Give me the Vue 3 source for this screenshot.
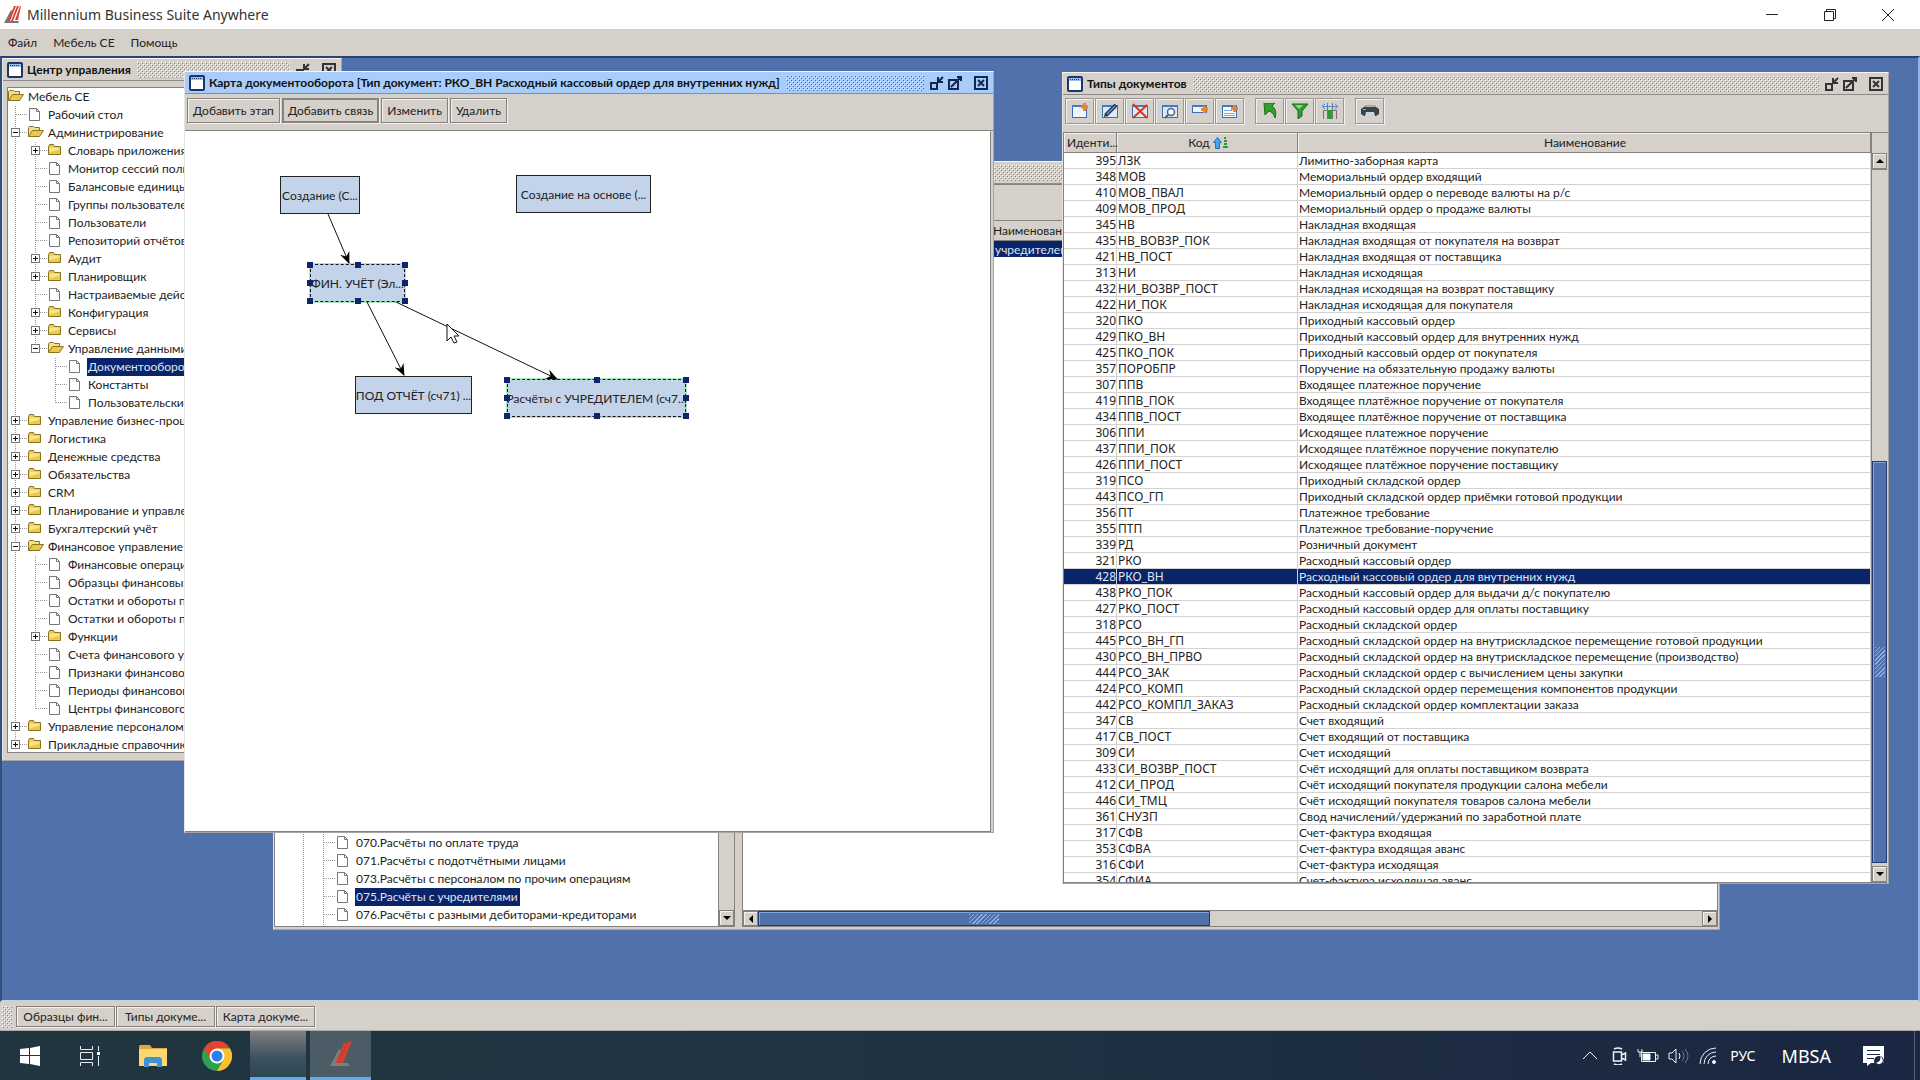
<script setup>
import { computed } from 'vue'

const menus = ['Файл', 'Мебель СЕ', 'Помощь']

// depth, kind (open | closed | doc), label
const navRows = [
  [0, 'open', 'Мебель СЕ'],
  [1, 'doc', 'Рабочий стол'],
  [1, 'open', 'Администрирование'],
  [2, 'closed', 'Словарь приложения'],
  [2, 'doc', 'Монитор сессий пользователей'],
  [2, 'doc', 'Балансовые единицы'],
  [2, 'doc', 'Группы пользователей'],
  [2, 'doc', 'Пользователи'],
  [2, 'doc', 'Репозиторий отчётов'],
  [2, 'closed', 'Аудит'],
  [2, 'closed', 'Планировщик'],
  [2, 'doc', 'Настраиваемые действия'],
  [2, 'closed', 'Конфигурация'],
  [2, 'closed', 'Сервисы'],
  [2, 'open', 'Управление данными'],
  [3, 'doc', 'Документооборот'],
  [3, 'doc', 'Константы'],
  [3, 'doc', 'Пользовательские'],
  [1, 'closed', 'Управление бизнес-процессами'],
  [1, 'closed', 'Логистика'],
  [1, 'closed', 'Денежные средства'],
  [1, 'closed', 'Обязательства'],
  [1, 'closed', 'CRM'],
  [1, 'closed', 'Планирование и управление'],
  [1, 'closed', 'Бухгалтерский учёт'],
  [1, 'open', 'Финансовое управление'],
  [2, 'doc', 'Финансовые операции'],
  [2, 'doc', 'Образцы финансовых'],
  [2, 'doc', 'Остатки и обороты по'],
  [2, 'doc', 'Остатки и обороты по'],
  [2, 'closed', 'Функции'],
  [2, 'doc', 'Счета финансового учёта'],
  [2, 'doc', 'Признаки финансового'],
  [2, 'doc', 'Периоды финансового'],
  [2, 'doc', 'Центры финансового'],
  [1, 'closed', 'Управление персоналом'],
  [1, 'closed', 'Прикладные справочники'],
]

const accountRows = [
  [3, 'doc', '070.Расчёты по оплате труда'],
  [3, 'doc', '071.Расчёты с подотчётными лицами'],
  [3, 'doc', '073.Расчёты с персоналом по прочим операциям'],
  [3, 'doc', '075.Расчёты с учредителями'],
  [3, 'doc', '076.Расчёты с разными дебиторами-кредиторами'],
  [3, 'doc', ''],
  [2, 'doc', ''],
]

function buildTree(rows, selected) {
  return rows.map(([depth, kind, label], i) => {
    const guides = []
    for (let level = 1; level <= depth; level++) {
      let more = false
      for (let j = i + 1; j < rows.length && rows[j][0] >= level; j++) {
        if (rows[j][0] === level) { more = true; break }
      }
      const own = level === depth
      guides.push({
        line: own ? (more ? 'full' : 'half') : (more ? 'full' : ''),
        own,
        toggle: own && kind !== 'doc' ? (kind === 'open' ? 'minus' : 'plus') : '',
      })
    }
    return { kind, label, guides, selected: label === selected }
  })
}

const navTree = computed(() => buildTree(navRows, 'Документооборот'))
const accountTree = computed(() => buildTree(accountRows, '075.Расчёты с учредителями'))
const trees = computed(() => ({ nav: navTree.value, accounts: accountTree.value }))

const docTypes = [
  [395, 'ЛЗК', 'Лимитно-заборная карта'],
  [348, 'МОВ', 'Мемориальный ордер входящий'],
  [410, 'МОВ_ПВАЛ', 'Мемориальный ордер о переводе валюты на р/с'],
  [409, 'МОВ_ПРОД', 'Мемориальный ордер о продаже валюты'],
  [345, 'НВ', 'Накладная входящая'],
  [435, 'НВ_ВОВЗР_ПОК', 'Накладная входящая от покупателя на возврат'],
  [421, 'НВ_ПОСТ', 'Накладная входящая от поставщика'],
  [313, 'НИ', 'Накладная исходящая'],
  [432, 'НИ_ВОЗВР_ПОСТ', 'Накладная исходящая на возврат поставщику'],
  [422, 'НИ_ПОК', 'Накладная исходящая для покупателя'],
  [320, 'ПКО', 'Приходный кассовый ордер'],
  [429, 'ПКО_ВН', 'Приходный кассовый ордер для внутренних нужд'],
  [425, 'ПКО_ПОК', 'Приходный кассовый ордер от покупателя'],
  [357, 'ПОРОБПР', 'Поручение на обязательную продажу валюты'],
  [307, 'ППВ', 'Входящее платежное поручение'],
  [419, 'ППВ_ПОК', 'Входящее платёжное поручение от покупателя'],
  [434, 'ППВ_ПОСТ', 'Входящее платёжное поручение от поставщика'],
  [306, 'ППИ', 'Исходящее платежное поручение'],
  [437, 'ППИ_ПОК', 'Исходящее платёжное поручение покупателю'],
  [426, 'ППИ_ПОСТ', 'Исходящее платёжное поручение поставщику'],
  [319, 'ПСО', 'Приходный складской ордер'],
  [443, 'ПСО_ГП', 'Приходный складской ордер приёмки готовой продукции'],
  [356, 'ПТ', 'Платежное требование'],
  [355, 'ПТП', 'Платежное требование-поручение'],
  [339, 'РД', 'Розничный документ'],
  [321, 'РКО', 'Расходный кассовый ордер'],
  [428, 'РКО_ВН', 'Расходный кассовый ордер для внутренних нужд'],
  [438, 'РКО_ПОК', 'Расходный кассовый ордер для выдачи д/с покупателю'],
  [427, 'РКО_ПОСТ', 'Расходный кассовый ордер для оплаты поставщику'],
  [318, 'РСО', 'Расходный складской ордер'],
  [445, 'РСО_ВН_ГП', 'Расходный складской ордер на внутрискладское перемещение готовой продукции'],
  [430, 'РСО_ВН_ПРВО', 'Расходный складской ордер на внутрискладское перемещение (производство)'],
  [444, 'РСО_ЗАК', 'Расходный складской ордер с вычислением цены закупки'],
  [424, 'РСО_КОМП', 'Расходный складской ордер перемещения компонентов продукции'],
  [442, 'РСО_КОМПЛ_ЗАКАЗ', 'Расходный складской ордер комплектации заказа'],
  [347, 'СВ', 'Счет входящий'],
  [417, 'СВ_ПОСТ', 'Счет входящий от поставщика'],
  [309, 'СИ', 'Счет исходящий'],
  [433, 'СИ_ВОЗВР_ПОСТ', 'Счёт исходящий для оплаты поставщиком возврата'],
  [412, 'СИ_ПРОД', 'Счёт исходящий покупателя продукции салона мебели'],
  [446, 'СИ_ТМЦ', 'Счёт исходящий покупателя товаров салона мебели'],
  [361, 'СНУЗП', 'Свод начислений/удержаний по заработной плате'],
  [317, 'СФВ', 'Счет-фактура входящая'],
  [353, 'СФВА', 'Счет-фактура входящая аванс'],
  [316, 'СФИ', 'Счет-фактура исходящая'],
  [354, 'СФИА', 'Счет-фактура исходящая аванс'],
]

const toolGroups = [
  [['new', 'Создать'], ['edit', 'Изменить'], ['delete', 'Удалить'], ['view', 'Просмотр'], ['copy', 'Добавить строку'], ['list', 'Добавить список']],
  [['refresh', 'Обновить'], ['filter', 'Фильтр'], ['columns', 'Колонки']],
  [['print', 'Печать']],
]

const mapActions = ['Добавить этап', 'Добавить связь', 'Изменить', 'Удалить']

const nodes = [
  { label: 'Создание (С...', x: 95, y: 44, w: 80 },
  { label: 'Создание на основе (...', x: 331, y: 43, w: 135 },
  { label: 'ФИН. УЧЁТ (Эл...', x: 125, y: 132, w: 95, selected: true },
  { label: 'ПОД ОТЧЁТ (сч71) ...', x: 170, y: 244, w: 117 },
  { label: 'Расчёты с УЧРЕДИТЕЛЕМ (сч7...', x: 322, y: 247, w: 179, selected: true },
]
const handles = ['nw', 'n', 'ne', 'w', 'e', 'sw', 's', 'se']
const links = [
  [143, 82, 164, 131],
  [182, 170, 219, 243],
  [211, 170, 372, 247],
]

const openWindows = ['Образцы фин...', 'Типы докуме...', 'Карта докуме...']
</script>

<template>
  <div class="screen">
    <header class="app-title">
      <svg class="app-logo" viewBox="0 0 17 20" aria-hidden="true">
        <path d="M0 18L7 5l2 2-4 9h9l1 2z" fill="#777" />
        <path d="M4 16L10 1h2L6 16zM7 16L13 1h2L9 16zM11 15L16 1h1l-3 14z" fill="#d8432f" />
      </svg>
      <h1>Millennium Business Suite Anywhere</h1>
      <div class="app-controls">
        <button type="button" aria-label="Свернуть"><svg viewBox="0 0 14 14"><path d="M1 6.500h12" /></svg></button>
        <button type="button" aria-label="Восстановить"><svg viewBox="0 0 14 14"><path d="M1.500 3.500h9v9h-9zM3.500 3.500v-2h9v9h-2" /></svg></button>
        <button type="button" aria-label="Закрыть"><svg viewBox="0 0 14 14"><path d="M1 1l12 12M13 1L1 13" /></svg></button>
      </div>
    </header>

    <nav class="menu-bar">
      <button v-for="m in menus" :key="m" type="button">{{ m }}</button>
    </nav>

    <main class="desktop">
      <section class="window samples-window">
        <div class="window-title"><span class="bumps"></span></div>
        <div class="samples-body">
          <div class="samples-tree">
            <ul class="tree">
              <li v-for="(row, i) in trees.accounts" :key="i" class="tree-row">
                <span class="guide"></span>
                <span v-for="(g, k) in row.guides.slice(1)" :key="k" class="guide" :class="[g.line, { own: g.own }]"></span>
                <svg class="tree-icon" viewBox="0 0 16 16" aria-hidden="true">
                  <path d="M1.500 1.500h7l3 3v9h-10zM8.500 1.500v3h3" fill="#fff" stroke="#777" />
                </svg>
                <span class="tree-label" :class="{ selected: row.selected }">{{ row.label }}</span>
              </li>
            </ul>
            <div class="vscroll">
              <span class="track"></span>
              <button type="button" aria-label="Вниз"><svg viewBox="0 0 8 8"><path d="M0 2h8L4 6z" /></svg></button>
            </div>
          </div>
          <div class="samples-detail">
            <div class="detail-tools"></div>
            <table class="detail-table">
              <thead><tr><th class="lead"></th><th>Наименование</th></tr></thead>
              <tbody><tr><td></td><td>учредителем</td></tr></tbody>
            </table>
            <div class="detail-space"></div>
            <div class="hscroll">
              <button type="button" aria-label="Влево"><svg viewBox="0 0 8 8"><path d="M6 0v8L2 4z" /></svg></button>
              <span class="thumb"><span class="grip"></span></span>
              <span class="track"></span>
              <button type="button" aria-label="Вправо"><svg viewBox="0 0 8 8"><path d="M2 0v8l4-4z" /></svg></button>
            </div>
          </div>
        </div>
      </section>

      <section class="window nav-window">
        <div class="window-title">
          <svg class="window-icon" viewBox="0 0 16 16" aria-hidden="true"><rect x="1" y="1" width="14" height="14" rx="1" fill="#fff" stroke="#1c3668" stroke-width="2" /><path d="M2 2h12v3H2z" fill="#9cc0ee" /><path d="M3 3.500h10" stroke="#1c3668" stroke-dasharray="1 1" /></svg>
          <h2>Центр управления</h2>
          <span class="bumps"></span>
          <button type="button" class="win-btn" aria-label="Свернуть"><svg viewBox="0 0 14 14"><path d="M1 7h6v6H1zM8 6L13 1M8 1v5h5" /></svg></button>
          <button type="button" class="win-btn close" aria-label="Закрыть"><svg viewBox="0 0 14 14"><path d="M1 1h12v12H1zM4 4l6 6M10 4l-6 6" /></svg></button>
        </div>
        <div class="nav-body">
          <ul class="tree">
            <li v-for="(row, i) in trees.nav" :key="i" class="tree-row">
              <span v-for="(g, k) in row.guides" :key="k" class="guide" :class="[g.line, { own: g.own }]">
                <button v-if="g.toggle" type="button" class="toggle" :aria-label="row.label">
                  <svg viewBox="0 0 9 9"><rect x="0.500" y="0.500" width="8" height="8" fill="#fff" stroke="#777" /><path :d="g.toggle === 'plus' ? 'M2 4.500h5M4.500 2v5' : 'M2 4.500h5'" stroke="#111" /></svg>
                </button>
              </span>
              <svg class="tree-icon" viewBox="0 0 16 16" aria-hidden="true">
                <path v-if="row.kind === 'doc'" d="M1.500 1.500h7l3 3v9h-10zM8.500 1.500v3h3" fill="#fff" stroke="#777" />
                <g v-else-if="row.kind === 'closed'">
                  <path d="M0.500 3.500l1-2h4l1 2h6v8h-12z" fill="#ecca45" stroke="#8a7420" />
                  <path d="M1.500 4.500h10v2l-10 3z" fill="#f8e48a" />
                </g>
                <g v-else>
                  <path d="M0.500 11.500v-9l1-1h4l1 1h5v3" fill="#f4e08a" stroke="#8a7420" />
                  <path d="M0.500 11.500l4-6h11l-4 6z" fill="#e9c84c" stroke="#8a7420" />
                </g>
              </svg>
              <span class="tree-label" :class="{ selected: row.selected }">{{ row.label }}</span>
            </li>
          </ul>
        </div>
      </section>

      <section class="window types-window">
        <div class="window-title">
          <svg class="window-icon" viewBox="0 0 16 16" aria-hidden="true"><rect x="1" y="1" width="14" height="14" rx="1" fill="#fff" stroke="#1c3668" stroke-width="2" /><path d="M2 2h12v3H2z" fill="#9cc0ee" /><path d="M3 3.500h10" stroke="#1c3668" stroke-dasharray="1 1" /></svg>
          <h2>Типы документов</h2>
          <span class="bumps"></span>
          <button type="button" class="win-btn" aria-label="Свернуть"><svg viewBox="0 0 14 14"><path d="M1 7h6v6H1zM8 6L13 1M8 1v5h5" /></svg></button>
          <button type="button" class="win-btn" aria-label="Развернуть"><svg viewBox="0 0 14 14"><path d="M1 4h9v9H1zM3 11L13 1M9 1h4v4" /></svg></button>
          <button type="button" class="win-btn close" aria-label="Закрыть"><svg viewBox="0 0 14 14"><path d="M1 1h12v12H1zM4 4l6 6M10 4l-6 6" /></svg></button>
        </div>
        <div class="types-tools">
          <div v-for="(group, gi) in toolGroups" :key="gi" class="tool-group">
            <button v-for="[icon, name] in group" :key="icon" type="button" class="tool" :aria-label="name">
              <svg viewBox="0 0 18 16" aria-hidden="true">
                <template v-if="icon === 'new'">
                  <rect x="1.500" y="2.500" width="14" height="12" fill="#eef5fd" stroke="#3a6fb5" /><path d="M1 2h10v2H1z" fill="#3f7ccc" />
                  <path d="M13.500 0v8M10 4h7" stroke="#ef8420" stroke-width="3" />
                </template>
                <template v-else-if="icon === 'edit'">
                  <rect x="1.500" y="2.500" width="15" height="12" fill="#dce9f8" stroke="#3a6fb5" /><path d="M1 2h15v2H1z" fill="#3f7ccc" />
                  <path d="M5 12L15 2" stroke="#27476f" stroke-width="4" /><path d="M6 11l8-8" stroke="#8fb7e4" /><path d="M3 14l1-4 3 3z" fill="#333" />
                </template>
                <template v-else-if="icon === 'delete'">
                  <rect x="1.500" y="2.500" width="15" height="12" fill="#dce9f8" stroke="#3a6fb5" /><path d="M1 2h16v2H1z" fill="#3f7ccc" />
                  <path d="M2 1l14 14M16 2L2 15" stroke="#d33a20" stroke-width="2" />
                </template>
                <template v-else-if="icon === 'view'">
                  <rect x="1.500" y="2.500" width="15" height="12" fill="#dce9f8" stroke="#3a6fb5" /><path d="M1 2h16v2H1z" fill="#3f7ccc" />
                  <circle cx="10" cy="9" r="3.500" fill="#fff" stroke="#49617f" stroke-width="1.500" /><path d="M7 12l-3 3" stroke="#49617f" stroke-width="2" />
                </template>
                <template v-else-if="icon === 'copy'">
                  <rect x="1.500" y="2.500" width="14" height="7" fill="#eef5fd" stroke="#3a6fb5" /><path d="M1 2h12v2H1z" fill="#3f7ccc" />
                  <path d="M13.500 3v7M10 6.500h7" stroke="#ef8420" stroke-width="3" />
                </template>
                <template v-else-if="icon === 'list'">
                  <rect x="1.500" y="2.500" width="14" height="12" fill="#fff" stroke="#3a6fb5" /><path d="M1 2h12v2H1z" fill="#3f7ccc" /><path d="M3 7.500h8M3 10.500h11M3 12.500h11" stroke="#7fa6d6" />
                  <path d="M13.500 2v7M10 5.500h7" stroke="#ef8420" stroke-width="3" />
                </template>
                <path v-else-if="icon === 'refresh'" d="M3 0h11l-3 3c3 2 5 6 3 12-1-4-3-6-6-7l-4 4z" fill="#33a02c" stroke="#16701a" />
                <template v-else-if="icon === 'filter'">
                  <path d="M1 1h16l-6 7v5l-4 3V8z" fill="#2f9c2f" stroke="#16701a" /><path d="M4 2h8l-4 4z" fill="#8fd98a" />
                </template>
                <template v-else-if="icon === 'columns'">
                  <path d="M1 3.500h16M4 1L1 3.500 4 6M14 1l3 2.500L14 6" fill="none" stroke="#4d93d8" />
                  <path d="M2.500 7v9M6.500 0v16M11.500 0v16M15.500 7v9M2 7.500h14" stroke="#777" /><path d="M7 7h4v9H7z" fill="#2f9c2f" />
                </template>
                <template v-else>
                  <path d="M4 3h10l1 4H3z" fill="#f2f2f2" stroke="#777" /><path d="M0 6l3-2h12l3 2v5l-3 2H3l-3-2z" fill="#39414d" /><path d="M5 9h8l1 4H4z" fill="#c9d3e2" /><path d="M2 6.500h3" stroke="#7e9cff" />
                </template>
              </svg>
            </button>
          </div>
        </div>
        <div class="types-body">
          <div class="table-view">
            <table class="types-table">
              <colgroup><col class="c-id" /><col class="c-code" /><col /></colgroup>
              <thead>
                <tr>
                  <th>Иденти...</th>
                  <th><span class="sorted">Код
                    <svg viewBox="0 0 15 12" aria-hidden="true"><path d="M4.500 0.500l4 5h-2v6h-4v-6h-2z" fill="#4aa3ee" stroke="#2470b8" /><path d="M11 1h2M11 4h3M11 7h3M10 10h5" stroke="#2e9a35" stroke-width="2" /></svg>
                  </span></th>
                  <th>Наименование</th>
                </tr>
              </thead>
              <tbody>
                <tr v-for="[id, code, name] in docTypes" :key="id" :class="{ selected: id === 428 }">
                  <td class="num">{{ id }}</td><td class="code">{{ code }}</td><td>{{ name }}</td>
                </tr>
              </tbody>
            </table>
          </div>
          <div class="vscroll">
            <span class="corner"></span>
            <button type="button" aria-label="Вверх"><svg viewBox="0 0 8 8"><path d="M0 6h8L4 2z" /></svg></button>
            <span class="track upper"></span>
            <span class="thumb"><span class="grip"></span></span>
            <span class="track lower"></span>
            <button type="button" aria-label="Вниз"><svg viewBox="0 0 8 8"><path d="M0 2h8L4 6z" /></svg></button>
          </div>
        </div>
      </section>

      <section class="window map-window active">
        <div class="window-title">
          <svg class="window-icon" viewBox="0 0 16 16" aria-hidden="true"><rect x="1" y="1" width="14" height="14" rx="1" fill="#fff" stroke="#1c3668" stroke-width="2" /><path d="M2 2h12v3H2z" fill="#9cc0ee" /><path d="M3 3.500h10" stroke="#1c3668" stroke-dasharray="1 1" /></svg>
          <h2>Карта документооборота [Тип документ: РКО_ВН Расходный кассовый ордер для внутренних нужд]</h2>
          <span class="bumps"></span>
          <button type="button" class="win-btn" aria-label="Свернуть"><svg viewBox="0 0 14 14"><path d="M1 7h6v6H1zM8 6L13 1M8 1v5h5" /></svg></button>
          <button type="button" class="win-btn" aria-label="Развернуть"><svg viewBox="0 0 14 14"><path d="M1 4h9v9H1zM3 11L13 1M9 1h4v4" /></svg></button>
          <button type="button" class="win-btn close" aria-label="Закрыть"><svg viewBox="0 0 14 14"><path d="M1 1h12v12H1zM4 4l6 6M10 4l-6 6" /></svg></button>
        </div>
        <div class="map-tools">
          <button v-for="a in mapActions" :key="a" type="button" class="metal-btn" :class="{ focused: a === 'Добавить связь' }">{{ a }}</button>
        </div>
        <div class="map-canvas">
          <div v-for="n in nodes" :key="n.label" class="node" :class="{ picked: n.selected }" :style="{ left: n.x + 'px', top: n.y + 'px', width: n.w + 'px' }">
            <span>{{ n.label }}</span>
            <template v-if="n.selected"><i v-for="h in handles" :key="h" class="handle" :class="h"></i></template>
          </div>
          <svg class="links" aria-hidden="true">
            <defs>
              <marker id="arrow" viewBox="0 0 12 10" refX="11" refY="5" markerWidth="12" markerHeight="10" markerUnits="userSpaceOnUse" orient="auto"><path d="M0 0l12 5-12 5 4-5z" /></marker>
            </defs>
            <line v-for="(l, i) in links" :key="i" :x1="l[0]" :y1="l[1]" :x2="l[2]" :y2="l[3]" stroke="#111" marker-end="url(#arrow)" />
            <path d="M262 192v17l4-4 3 6 3-1-3-6h5z" fill="#fff" stroke="#111" />
          </svg>
        </div>
      </section>
    </main>

    <div class="window-bar">
      <span class="bar-grip"></span>
      <button v-for="w in openWindows" :key="w" type="button" class="metal-btn">{{ w }}</button>
    </div>

    <footer class="taskbar">
      <button type="button" class="task" aria-label="Пуск">
        <svg viewBox="0 0 20 20" width="20" height="20"><path d="M0 3l9-1v7H0zM10 2l10-2v9H10zM0 10h9v8l-9-1zM10 10h10v10l-10-2z" fill="#fff" /></svg>
      </button>
      <button type="button" class="task" aria-label="Представление задач">
        <svg viewBox="0 0 20 20" width="20" height="20"><path d="M0.500 0v3.500h12V0M0.500 6.500h12v7H0.500zM0.500 20v-3.500h12V20M18.500 0v5M18.500 10v10" fill="none" stroke="#e8edf0" /><path d="M17 6h3v3h-3z" fill="#fff" /></svg>
      </button>
      <button type="button" class="task wide" aria-label="Проводник">
        <svg viewBox="0 0 28 24" width="28" height="24"><path d="M0 2l1-1h10l2 3h15v18H0z" fill="#e8a33a" /><path d="M0 5h28v17H0z" fill="#fbd873" /><path d="M5 23v-8l2-2h14l2 2v8h-5v-4h-8v4z" fill="#3f92d6" /></svg>
      </button>
      <button type="button" class="task chrome" aria-label="Chrome">
        <svg viewBox="0 0 30 30" width="30" height="30"><circle cx="15" cy="15" r="15" fill="#2ea04e" /><path d="M2 7.500A15 15 0 0 1 28 7.500H15L8.500 18.700z" fill="#e5422f" /><path d="M28 7.500A15 15 0 0 1 15 30l6.500-11.200L15 7.500z" fill="#fbc02d" /><circle cx="15" cy="15" r="7.500" fill="#fff" /><circle cx="15" cy="15" r="5.500" fill="#2f7de9" /></svg>
      </button>
      <button type="button" class="running dim" aria-label="Приложение"></button>
      <button type="button" class="running current" aria-label="Millennium Business Suite">
        <svg viewBox="0 0 24 26" width="24" height="26"><path d="M1 25L10 8l3 2-6 12h12l2 3z" fill="#7b7f80" /><path d="M6 22L15 2l8-2-9 22z" fill="#d8402e" /><path d="M10 22L18 2" stroke="#8d3b36" stroke-dasharray="2 2" /></svg>
      </button>
      <div class="tray">
        <svg viewBox="0 0 16 16" width="16" height="16"><path d="M1 11l7-7 7 7" /></svg>
        <svg viewBox="0 0 16 18" width="16" height="18"><path d="M1.500 5h8v9h-8zM9.500 8l4-2v7l-4-2M2 2q4-2 8 0M2 17q4 2 8 0" stroke-width="1.500" /></svg>
        <svg viewBox="0 0 22 16" width="22" height="16"><path d="M4.500 4.500h14v9h-14zM19 7h2v4h-2M1 1v3h4V1M3 4v5" /><path d="M6 6h7v6H6z" fill="#fff" /></svg>
        <svg viewBox="0 0 22 18" width="22" height="18"><path d="M1 6h3l4-4v14l-4-4H1zM11 6q2 3 0 6" /><path d="M14 4q4 5 0 10M17 2q6 7 0 14" opacity="0.400" /></svg>
        <svg viewBox="0 0 18 18" width="18" height="18"><path d="M1 17A16 16 0 0 1 17 1M5 17A12 12 0 0 1 17 5M9 17a8 8 0 0 1 8-8" /><circle cx="15" cy="15" r="1.500" fill="#fff" /></svg>
        <span class="lang">РУС</span>
        <span class="clock">MBSA</span>
        <button type="button" class="notice" aria-label="Уведомления">
          <svg viewBox="0 0 22 22" width="22" height="22"><path d="M0 1h21v17H8l-4 3v-3H0z" fill="#fff" stroke="none" /><path d="M4 5.500h13M4 9.500h13M4 13.500h7" stroke="#1b2945" /><circle cx="16" cy="16" r="5" fill="#1b2945" stroke="none" /><path d="M17 11q2 5-4 7 5 3 7-2 0-3-3-5z" fill="#fff" stroke="none" /></svg>
        </button>
      </div>
    </footer>
  </div>
</template>

<style>
body { margin: 0; overflow: hidden; }
</style>

<style scoped>
.screen {
  display: flex; flex-direction: column; height: 100vh; overflow: hidden;
  font: 12px/16px Lato, "Noto Sans", sans-serif; color: #222;
}
.screen * { box-sizing: border-box; }
button { font: inherit; color: inherit; border: 0; margin: 0; padding: 0; background: none; }
h1, h2 { margin: 0; }
svg { display: block; }

.app-title { display: flex; align-items: center; height: 29px; padding: 0 3px 0 4px; gap: 6px; background: #fff; flex: none; }
.app-logo { width: 17px; height: 20px; }
.app-title h1 { font: 400 14px/20px "Noto Sans", sans-serif; color: #333; flex: 1; }
.app-controls { display: flex; }
.app-controls button { width: 58px; height: 28px; display: grid; place-items: center; }
.app-controls svg { width: 14px; height: 14px; fill: none; stroke: #222; }

.menu-bar { display: flex; align-items: center; gap: 16px; height: 27px; padding-left: 8px; background: #d5d0ca; flex: none; }

.desktop {
  position: relative; flex: 1; overflow: hidden; background: #5171ad;
  border: 2px solid; border-color: #2b4272 #8cb9ec #bdd3e6 #34507f;
}

.window {
  position: absolute; display: flex; flex-direction: column; overflow: hidden;
  background: #d5d0ca; border: 1px solid; border-color: #f4f4f4 #a5a5a5 #a5a5a5 #e6e4e0;
}
.window-title { display: flex; align-items: center; height: 22px; padding: 0 5px 0 4px; border-bottom: 1px solid #8e8c89; flex: none; }
.active .window-title { background: #a8cdfb; }
.window-icon { width: 16px; height: 16px; margin-right: 4px; flex: none; }
.window-title h2 { font-size: 12px; line-height: 16px; color: #111; white-space: nowrap; }
.bumps, .bar-grip {
  background:
    conic-gradient(from 270deg at 1px 1px, #fff 90deg, transparent 0) 0 0 / 4px 4px,
    conic-gradient(from 270deg at 1px 1px, #fff 90deg, transparent 0) 2px 2px / 4px 4px,
    conic-gradient(from 270deg at 1px 1px, #86827e 90deg, transparent 0) 1px 1px / 4px 4px,
    conic-gradient(from 270deg at 1px 1px, #86827e 90deg, transparent 0) 3px 3px / 4px 4px;
}
.bumps { flex: 1; height: 16px; margin: 0 6px; }
.active .bumps {
  background:
    conic-gradient(from 270deg at 1px 1px, #dcebff 90deg, transparent 0) 0 0 / 4px 4px,
    conic-gradient(from 270deg at 1px 1px, #dcebff 90deg, transparent 0) 2px 2px / 4px 4px,
    conic-gradient(from 270deg at 1px 1px, #48658c 90deg, transparent 0) 1px 1px / 4px 4px,
    conic-gradient(from 270deg at 1px 1px, #48658c 90deg, transparent 0) 3px 3px / 4px 4px;
}
.win-btn { width: 14px; height: 14px; margin-right: 4px; flex: none; }
.win-btn.close { margin: 0 0 0 8px; }
.win-btn svg { width: 14px; height: 14px; fill: none; stroke: #333; stroke-width: 2; }
.active .win-btn svg { stroke: #14264f; }

.nav-window { left: 0; top: 0; width: 340px; height: 703px; }
.nav-body { flex: 1; margin: 6px 4px 7px 4px; border: 1px solid #85827e; background: #fff; overflow: hidden; }
.map-window { left: 182px; top: 13px; width: 810px; height: 762px; }
.types-window { left: 1060px; top: 14px; width: 827px; height: 812px; }
.samples-window { left: 271px; top: 103px; width: 1447px; height: 769px; }

.tree { list-style: none; margin: 0; padding: 0; }
.tree-row { display: flex; align-items: center; height: 18px; white-space: nowrap; }
.guide { width: 20px; height: 18px; flex: none; --dots: repeating-linear-gradient(#999 0 1px, transparent 1px 2px); --dash: repeating-linear-gradient(90deg, #999 0 1px, transparent 1px 2px); }
.guide.full { background: var(--dots) 7px 0 / 1px 18px no-repeat; }
.guide.own.full { background: var(--dots) 7px 0 / 1px 18px no-repeat, var(--dash) 8px 8px / 12px 1px no-repeat; }
.guide.own.half { background: var(--dots) 7px 0 / 1px 9px no-repeat, var(--dash) 8px 8px / 12px 1px no-repeat; }
.toggle { display: block; width: 9px; height: 9px; margin: 4px 3px; }
.tree-icon { width: 16px; height: 16px; flex: none; }
.tree-label { margin-left: 3px; padding: 0 2px 0 1px; line-height: 18px; height: 18px; }
.tree-label.selected { background: #0a246a; color: #dfe6f5; }

.map-tools { display: flex; gap: 2px; padding: 4px 2px 7px; border-bottom: 1px solid #85827e; flex: none; }
.metal-btn {
  height: 25px; padding: 0 5px; border: 1px solid #85827e; white-space: nowrap;
  box-shadow: inset 1px 1px #f3f1ee, 1px 1px #f3f1ee;
}
.metal-btn.focused { box-shadow: inset 0 0 0 1px #6f87b5, 1px 1px #f3f1ee; }
.map-canvas { position: relative; flex: 1; background: #fff; margin-right: 2px; border: 1px solid #85827e; border-width: 1px 1px 1px 0; border-top-color: #fff; }
.links { position: absolute; inset: 0; width: 100%; height: 100%; }
.node {
  position: absolute; height: 38px; display: flex; align-items: center; justify-content: center; padding-top: 2px;
  background: #c3d3ea; border: 1px solid #222; white-space: nowrap;
}
.node.picked { border: 1px dashed #111; box-shadow: 0 0 0 1px #a9e8ba; }
.handle { position: absolute; width: 6px; height: 6px; background: #10246a; }
.nw, .n, .ne { top: -3px; }
.sw, .s, .se { bottom: -3px; }
.w, .e { top: calc(50% - 3px); }
.nw, .w, .sw { left: -4px; }
.ne, .e, .se { right: -4px; }
.n, .s { left: calc(50% - 3px); }

.types-tools { display: flex; gap: 11px; padding: 3px 2px 8px; border-bottom: 1px solid #85827e; flex: none; }
.tool-group { display: flex; gap: 1px; }
.tool { width: 29px; height: 26px; display: grid; place-items: center; border: 1px solid #9a9793; box-shadow: inset 1px 1px #f3f1ee, 1px 1px #f3f1ee; }
.tool svg { width: 18px; height: 16px; fill: none; }
.types-body { flex: 1; display: flex; min-height: 0; border-bottom: 1px solid #85827e; margin-right: 1px; }
.table-view { flex: 1; overflow: hidden; background: #fff; border-left: 1px solid #85827e; }
.types-table { width: 100%; table-layout: fixed; border-collapse: separate; border-spacing: 0; }
.c-id { width: 53px; }
.c-code { width: 181px; }
.types-table th { height: 20px; padding: 0 1px 0 3px; background: #d5d0ca; font-weight: 400; line-height: 18px; border-right: 1px solid #85827e; border-bottom: 1px solid #85827e; box-shadow: inset 1px 1px #f3f1ee; white-space: nowrap; }
.types-table td { height: 16px; padding: 0 0 0 1px; line-height: 15px; border-right: 1px solid #d5d2cf; border-bottom: 1px solid #d5d2cf; white-space: nowrap; overflow: hidden; }
.types-table td.num { text-align: right; }
.types-table td.num, .types-table td.code { font-family: "Noto Sans", sans-serif; }
.types-table .selected td { background: #0a246a; color: #dfe6f5; }
.sorted { display: inline-flex; align-items: center; gap: 3px; }
.sorted svg { width: 15px; height: 12px; }

.vscroll { width: 16px; display: flex; flex-direction: column; border-left: 1px solid #85827e; background: #d5d0ca; flex: none; }
.vscroll button, .hscroll button { width: 15px; height: 16px; display: grid; place-items: center; border: 1px solid #85827e; box-shadow: inset 1px 1px #f3f1ee; flex: none; }
.vscroll svg, .hscroll svg { width: 8px; height: 8px; fill: #000; }
.vscroll .corner { height: 20px; flex: none; }
.vscroll .track { flex: 1; }
.vscroll .upper { flex: 292; border-top: 1px solid #85827e; }
.vscroll .thumb { flex: 401; }
.vscroll .lower { flex: 3; }
.thumb { display: grid; place-items: center; background: #5171ad; border: 1px solid #223a6d; box-shadow: inset 1px 1px #7fa3dc; }
.grip { width: 10px; height: 30px; background: repeating-linear-gradient(135deg, #8db0e6 0 1px, transparent 1px 3px); }

.samples-body { flex: 1; display: flex; min-height: 0; gap: 7px; }
.samples-tree { width: 461px; display: flex; background: #fff; border: 1px solid #85827e; flex: none; margin-bottom: 2px; }
.samples-tree .tree { flex: 1; align-self: flex-end; height: 92px; overflow: hidden; padding-left: 1px; }
.samples-detail { flex: 1; display: flex; flex-direction: column; min-width: 0; border: 1px solid #85827e; margin: 0 1px 2px 0; }
.detail-tools { height: 36px; border-bottom: 1px solid #85827e; flex: none; }
.detail-table { width: 100%; border-spacing: 0; table-layout: fixed; text-align: left; flex: none; }
.detail-table .lead { width: 250px; }
.detail-table th { height: 20px; padding: 0; font-weight: 400; border-bottom: 1px solid #85827e; }
.detail-table td { height: 16px; padding: 0 0 0 2px; line-height: 15px; background: #0a246a; color: #dfe6f5; }
.detail-space { flex: 1; background: #fff; }
.hscroll { display: flex; height: 16px; flex: none; border-top: 1px solid #85827e; }
.hscroll button { height: 15px; }
.hscroll .thumb { flex: 450; }
.hscroll .track { flex: 493; }
.hscroll .grip { width: 30px; height: 10px; }

.window-bar { display: flex; align-items: center; height: 29px; padding: 1px 0 0 2px; background: #d5d0ca; border-bottom: 1px solid #aaa; flex: none; }
.bar-grip { width: 10px; height: 22px; margin-right: 4px; }
.window-bar .metal-btn { width: 99px; height: 21px; margin-right: 1px; padding: 0; line-height: 19px; }

.taskbar { display: flex; height: 49px; background: linear-gradient(90deg, #213540, #203341 45%, #1a2642); color: #fff; flex: none; }
.task { width: 60px; display: grid; place-items: center; }
.task.wide { width: 66px; }
.task.chrome { width: 62px; }
.running { display: grid; place-items: center; border-bottom: 3px solid #66a9e6; }
.running.dim { width: 56px; margin: 0 4px 0 2px; background: linear-gradient(#7d7f80, #3c5060 60%, #2b4654); }
.running.current { width: 61px; background: #4b5c66; }
.tray { flex: 1; display: flex; align-items: center; justify-content: flex-end; gap: 9px; margin-right: 5px; padding-right: 24px; border-right: 1px solid #56617a; }
.tray svg { fill: none; stroke: #eef1f6; }
.tray svg:first-child { margin-right: 5px; }
.lang { margin-left: 4px; font: 14px/20px "Noto Sans", sans-serif; }
.clock { margin: 0 23px 0 17px; font: 18px/24px "Noto Sans", sans-serif; }
</style>
